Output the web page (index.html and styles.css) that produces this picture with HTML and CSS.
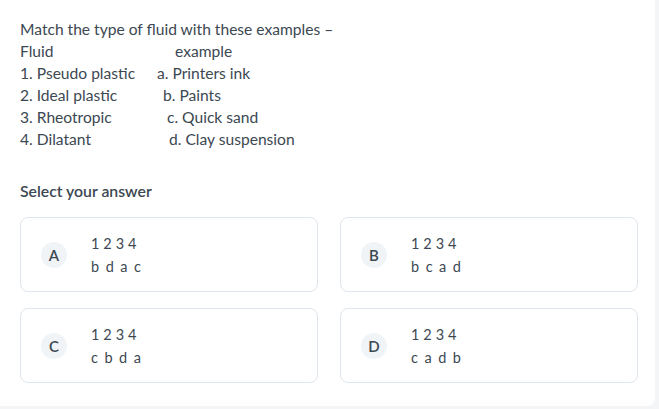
FILE: index.html
```html
<!DOCTYPE html>
<html lang="en">
<head>
<meta charset="utf-8">
<title>Question</title>
<link rel="stylesheet" href="styles.css">
</head>
<body>
<main class="card">
  <section class="question">
    <div class="line">Match the type of fluid with these examples –</div>
    <div class="row"><span class="left">Fluid</span><span class="right p5">example</span></div>
    <div class="row"><span class="left">1. Pseudo plastic</span><span class="right p1">a. Printers ink</span></div>
    <div class="row"><span class="left">2. Ideal plastic</span><span class="right p2">b. Paints</span></div>
    <div class="row"><span class="left">3. Rheotropic</span><span class="right p3">c. Quick sand</span></div>
    <div class="row"><span class="left">4. Dilatant</span><span class="right p4">d. Clay suspension</span></div>
  </section>
  <h2 class="label">Select your answer</h2>
  <div class="options">
    <div class="option"><span class="badge">A</span><div class="answer"><div class="nums">1 2 3 4</div><div class="letters">b d a c</div></div></div>
    <div class="option"><span class="badge">B</span><div class="answer"><div class="nums">1 2 3 4</div><div class="letters">b c a d</div></div></div>
    <div class="option"><span class="badge">C</span><div class="answer"><div class="nums">1 2 3 4</div><div class="letters">c b d a</div></div></div>
    <div class="option"><span class="badge">D</span><div class="answer"><div class="nums">1 2 3 4</div><div class="letters">c a d b</div></div></div>
  </div>
</main>
</body>
</html>
```
FILE: styles.css
```css
* { box-sizing: border-box; }
html, body { margin: 0; padding: 0; }
body {
  background: #f3f5f7;
  font-family: Lato, "Noto Sans", sans-serif;
  color: #3c4852;
  width: 659px;
  height: 409px;
  overflow: hidden;
}
.card {
  background: #ffffff;
  width: 655px;
  height: 406px;
  border-radius: 0 0 8px 0;
  padding: 18px 20px 0 20px;
}
.question {
  font-size: 15.6px;
  line-height: 22px;
}
.row { display: flex; }
.left { width: 137px; flex: none; }
.p1 { padding-left: 0; }
.p2 { padding-left: 6px; }
.p3 { padding-left: 10px; }
.p4 { padding-left: 12px; }
.p5 { padding-left: 18px; }
.label {
  margin: 30px 0 0 0;
  font-size: 15.8px;
  line-height: 22px;
  font-weight: 600;
}
.options {
  margin-top: 15px;
  display: grid;
  grid-template-columns: 298px 298px;
  column-gap: 22px;
  row-gap: 16px;
}
.option {
  height: 75px;
  border: 1px solid #dfe5ec;
  border-radius: 8px;
  display: flex;
  align-items: center;
  padding-left: 20px;
}
.badge {
  width: 26px;
  height: 26px;
  border-radius: 50%;
  background: #f0f4f7;
  display: flex;
  align-items: center;
  justify-content: center;
  font-size: 15px;
  font-weight: 600;
  flex: none;
}
.answer {
  margin-left: 24px;
  font-size: 14.5px;
  line-height: 23px;
}
.nums { letter-spacing: 0.1px; }
.letters { letter-spacing: 1.4px; }
```
